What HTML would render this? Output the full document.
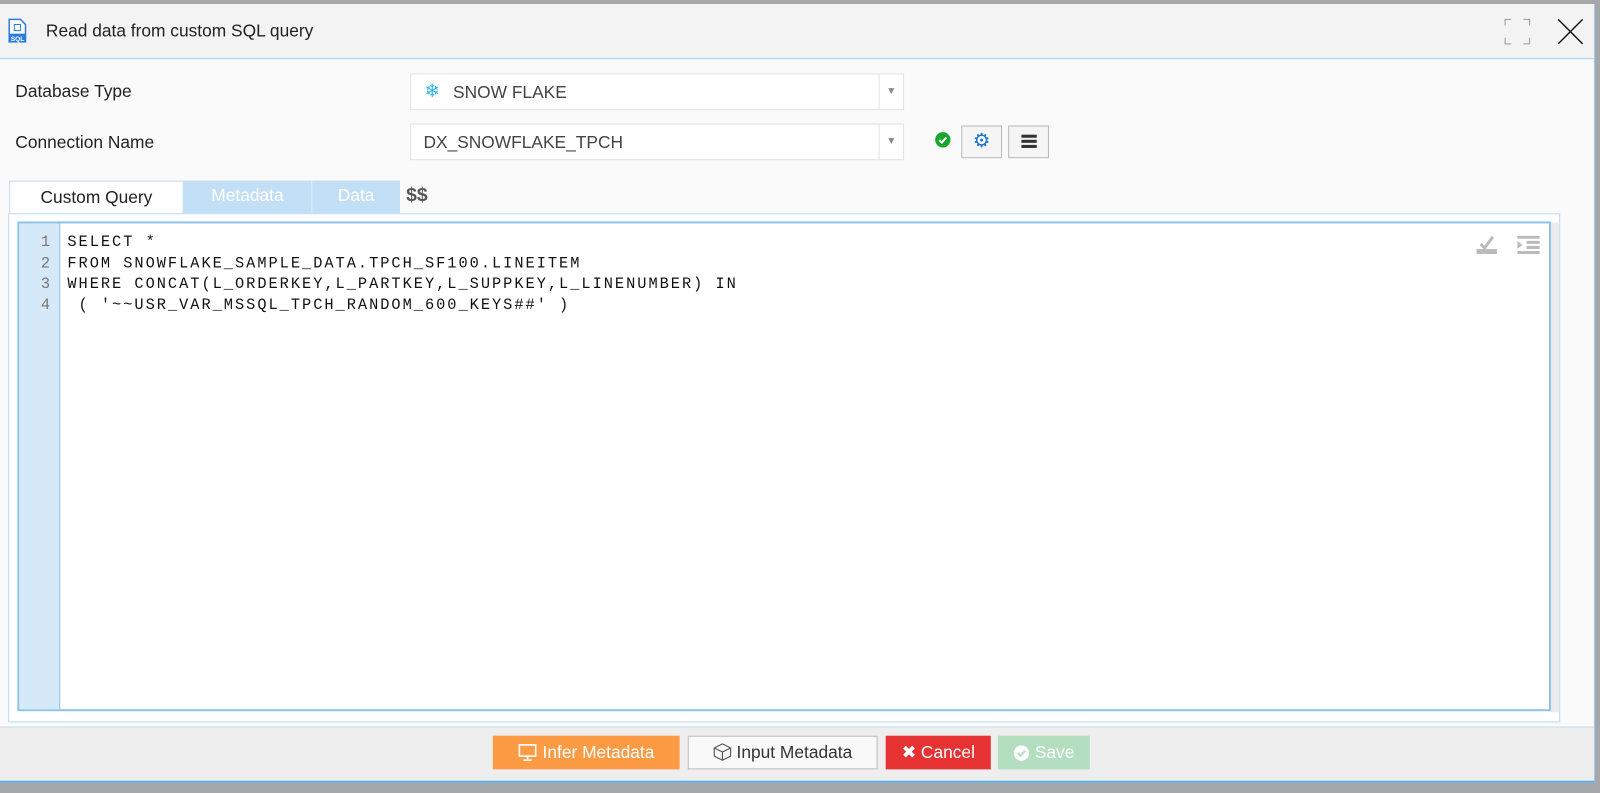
<!DOCTYPE html>
<html><head><style>
*{box-sizing:border-box;margin:0;padding:0}
body{width:1600px;height:793px;background:#a4a8ab;font-family:"Liberation Sans",sans-serif;position:relative;overflow:hidden}
#wrap{position:absolute;left:0;top:0;width:1568px;height:777px;transform:scale(1.0204);transform-origin:0 0}
.abs{position:absolute}
.win{left:0;top:4px;width:1563px;height:763px;background:#fafafa;border-right:1px solid #9cc8ec;border-bottom:2px solid #5aaee6}
.hdr{left:0;top:0;width:1562px;height:54px;background:#f3f3f3;border-bottom:1px solid #a9d0ef}
.lbl{font-size:17px;color:#222}
.sel{background:#fff;border:1px solid #e2e2e2;height:36px;font-size:17px;color:#444}
.sel .arr{position:absolute;right:0;top:0;width:24px;height:34px;border-left:1px solid #e2e2e2;color:#888;font-size:10px;text-align:center;line-height:34px}
.code{font-family:"Liberation Mono",monospace;font-size:15px;letter-spacing:1.95px;color:#111;line-height:20.7px;white-space:pre}
.btn{height:33px;font-size:17px;line-height:33px;color:#fff;text-align:center}
</style></head><body><div id="wrap">
<div class="abs win">
 <div class="abs hdr">
  <svg class="abs" style="left:8px;top:14px" width="18" height="24" viewBox="0 0 18 24"><path d="M1 1h11l5 5v17H1z" fill="#fff" stroke="#2d7be0" stroke-width="1.5"/><rect x="1" y="15" width="16" height="8" fill="#2d7be0"/><text x="2.5" y="22" font-size="6.5" fill="#fff" font-family="Liberation Sans" font-weight="bold">SQL</text><rect x="6" y="6" width="6" height="6" fill="none" stroke="#2d7be0"/></svg>
  <div class="abs" style="left:45px;top:17px;font-size:17px;color:#222">Read data from custom SQL query</div>
  <svg class="abs" style="left:1474px;top:14px" width="26" height="26"><path d="M1 7V1h6M19 1h6v6M25 19v6h-6M7 25H1v-6" fill="none" stroke="#999" stroke-width="1"/></svg>
  <svg class="abs" style="left:1526px;top:14px" width="26" height="26"><path d="M1 1L25 25M25 1L1 25" stroke="#111" stroke-width="1.4"/></svg>
 </div>
 <div class="abs lbl" style="left:15px;top:76px">Database Type</div>
 <div class="abs lbl" style="left:15px;top:126px">Connection Name</div>
 <div class="abs sel" style="left:402px;top:68px;width:484px"><span class="abs" style="left:13px;top:6px;color:#29b5e8;font-size:18px">❄</span><span class="abs" style="left:41px;top:8px">SNOW FLAKE</span><div class="arr">▼</div></div>
 <div class="abs sel" style="left:402px;top:117px;width:484px"><span class="abs" style="left:12px;top:8px">DX_SNOWFLAKE_TPCH</span><div class="arr">▼</div></div>
 <svg class="abs" style="left:916px;top:125px" width="16" height="16"><circle cx="8" cy="8" r="7.5" fill="#1aa52b"/><path d="M4.5 8.2l2.5 2.5 4.5-5" stroke="#fff" stroke-width="2" fill="none"/></svg>
 <div class="abs" style="left:942px;top:119px;width:40px;height:32px;border:1px solid #bbb;background:#f5f5f5;color:#1a73d0;font-size:19px;text-align:center;line-height:30px">⚙</div>
 <div class="abs" style="left:988px;top:119px;width:40px;height:32px;border:1px solid #bbb;background:#f5f5f5"><div class="abs" style="left:12px;top:8px;width:15px;height:2.5px;background:#333;box-shadow:0 5px 0 #333,0 10px 0 #333"></div></div>
 <div class="abs" style="left:9px;top:173px;width:171px;height:33px;background:#fff;border:1px solid #bcdcf3;border-bottom:none;font-size:17px;color:#222;text-align:center;line-height:32px">Custom Query</div>
 <div class="abs" style="left:180px;top:173px;width:126px;height:32px;background:#c3dff5;font-size:17px;color:#fff;text-align:center;line-height:30px;border-right:1px solid #d8eaf8">Metadata</div>
 <div class="abs" style="left:306px;top:173px;width:86px;height:32px;background:#c3dff5;font-size:17px;color:#fff;text-align:center;line-height:30px">Data</div>
 <div class="abs" style="left:398px;top:177px;font-size:19px;color:#555;font-weight:bold">$$</div>
 <div class="abs" style="left:8px;top:205px;width:1521px;height:499px;background:#fff;border:1px solid #bcdcf3"></div>
 <div class="abs" style="left:1520px;top:214px;width:8px;height:480px;background:#ececec"></div>
 <div class="abs" style="left:17px;top:213px;width:1503px;height:480px;background:#fff;border:2px solid #8ec4ec"></div>
 <div class="abs" style="left:19px;top:215px;width:40px;height:476px;background:#d6e9f8;border-right:1px solid #8ec4ec"></div>
 <div class="abs code" style="left:40px;top:224px;color:#777;letter-spacing:0">1
2
3
4</div>
 <div class="abs code" style="left:66px;top:224px">SELECT *
FROM SNOWFLAKE_SAMPLE_DATA.TPCH_SF100.LINEITEM
WHERE CONCAT(L_ORDERKEY,L_PARTKEY,L_SUPPKEY,L_LINENUMBER) IN
 ( '~~USR_VAR_MSSQL_TPCH_RANDOM_600_KEYS##' )</div>
 <svg class="abs" style="left:1446px;top:225px" width="22" height="20"><path d="M5 10l4 4 8-11" stroke="#bbb" stroke-width="3" fill="none"/><rect x="1" y="15" width="20" height="5" fill="#bbb"/></svg>
 <svg class="abs" style="left:1487px;top:227px" width="22" height="18"><path d="M0 0h22v3H0zM9 5h13v3H9zM9 10h13v3H9zM0 15h22v3H0zM0 5l5 4-5 4z" fill="#bbb"/></svg>
 <div class="abs" style="left:0;top:708px;width:1562px;height:53px;background:#eee;border-top:1px solid #c5dced"></div>
</div>
<div class="abs btn" style="left:483px;top:721px;width:183px;background:#fd9b45"><svg style="vertical-align:-3px;margin-right:6px" width="18" height="17"><rect x="1" y="1" width="16" height="11" fill="none" stroke="#fff" stroke-width="1.6"/><path d="M9 12v3M5 16h8" stroke="#fff" stroke-width="1.6"/></svg>Infer Metadata</div>
<div class="abs btn" style="left:674px;top:721px;width:186px;background:#f9f9f9;border:1px solid #bbb;color:#333;line-height:31px"><svg style="vertical-align:-3px;margin-right:5px" width="18" height="18"><path d="M9 1l8 4v8l-8 4-8-4V5zM1 5l8 4 8-4M9 9v8" fill="none" stroke="#555" stroke-width="1.1"/></svg>Input Metadata</div>
<div class="abs btn" style="left:868px;top:721px;width:103px;background:#e63232">✖ Cancel</div>
<div class="abs btn" style="left:978px;top:721px;width:90px;background:#b3dfc0"><svg style="vertical-align:-3px;margin-right:5px" width="16" height="16"><circle cx="8" cy="8" r="7.5" fill="#fff"/><path d="M4.5 8.2l2.5 2.5 4.5-5" stroke="#b3dfc0" stroke-width="2" fill="none"/></svg>Save</div>
</div></body></html>
